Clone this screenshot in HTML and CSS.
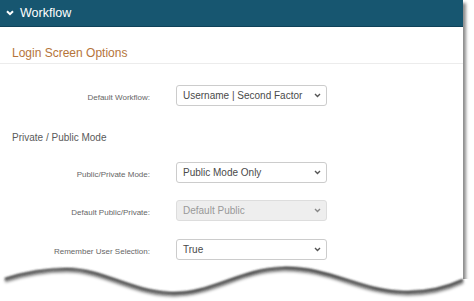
FILE: index.html
```html
<!DOCTYPE html>
<html lang="en">
<head>
    <meta charset="UTF-8">
    <title>Workflow</title>
    <link rel="stylesheet" href="styles.css">
</head>
<body>
    <div class="panel">
        <div class="panel-header">
            <svg class="caret" width="8" height="6" viewBox="0 0 8 6"><path d="M1 1.2 L4 4.2 L7 1.2" fill="none" stroke="#fff" stroke-width="2"/></svg>
            Workflow
        </div>

        <h3 class="section-title">Login Screen Options</h3>

        <div class="form-row first">
            <label>Default Workflow:</label>
            <div class="select">
                <span>Username | Second Factor</span>
                <svg width="7" height="5" viewBox="0 0 7 5"><path d="M1 1 L3.5 3.5 L6 1" fill="none" stroke="#555" stroke-width="1.4"/></svg>
            </div>
        </div>

        <div class="sub-title">Private / Public Mode</div>

        <div class="form-row">
            <label>Public/Private Mode:</label>
            <div class="select">
                <span>Public Mode Only</span>
                <svg width="7" height="5" viewBox="0 0 7 5"><path d="M1 1 L3.5 3.5 L6 1" fill="none" stroke="#555" stroke-width="1.4"/></svg>
            </div>
        </div>

        <div class="form-row">
            <label>Default Public/Private:</label>
            <div class="select disabled">
                <span>Default Public</span>
                <svg width="7" height="5" viewBox="0 0 7 5"><path d="M1 1 L3.5 3.5 L6 1" fill="none" stroke="#888" stroke-width="1.4"/></svg>
            </div>
        </div>

        <div class="form-row">
            <label>Remember User Selection:</label>
            <div class="select">
                <span>True</span>
                <svg width="7" height="5" viewBox="0 0 7 5"><path d="M1 1 L3.5 3.5 L6 1" fill="none" stroke="#555" stroke-width="1.4"/></svg>
            </div>
        </div>
    </div>

    <!-- torn edge over the bottom of the panel -->
    <svg class="torn" width="474" height="51" viewBox="0 250 474 51">
        <defs>
            <filter id="soft" x="-5%" y="-50%" width="110%" height="200%">
                <feGaussianBlur stdDeviation="0.8"/>
            </filter>
            <filter id="wide" x="-5%" y="-50%" width="110%" height="200%">
                <feGaussianBlur stdDeviation="1.8"/>
            </filter>
        </defs>
        <path d="M0,279 L5,278 C30,270 48,268 67,268 C102,268 130,290 170,292 C210,294 240,268 283,267 C330,266 360,290 403,291 C430,292 450,285 463,279 L474,279 L474,301 L0,301 Z" fill="#fff"/>
        <path d="M5,279 C30,271 48,269 67,269 C102,269 130,291 170,293 C210,295 240,269 283,268 C330,267 360,291 403,292 C430,293 450,286 463,280" fill="none" stroke="#000" stroke-opacity="0.45" stroke-width="3.5" filter="url(#wide)" transform="translate(0,1.8)"/>
        <path d="M5,278 C30,270 48,268 67,268 C102,268 130,290 170,292 C210,294 240,268 283,267 C330,266 360,290 403,291 C430,292 450,285 463,279" fill="none" stroke="#333" stroke-width="2.2" filter="url(#soft)" transform="translate(0,1)"/>
    </svg>
</body>
</html>
```

FILE: styles.css
```css
body {
    margin: 0;
    background: #fff;
    font-family: "Liberation Sans", Arial, sans-serif;
}
.panel {
    width: 463px;
    height: 300px;
    background: #fff;
    box-shadow: 3px 3px 3px rgba(0, 0, 0, 0.45);
}
.panel-header {
    height: 27px;
    box-sizing: border-box;
    background: #175670;
    border-bottom: 1px solid #0f4259;
    color: #fff;
    font-size: 12.5px;
    display: flex;
    align-items: center;
    gap: 6px;
    padding: 0 0 1px 6px;
}
.caret {
    margin-top: 1px;
}
.section-title {
    margin: 19px 0 0;
    padding: 0 12px 3px;
    font-size: 12px;
    line-height: 14px;
    font-weight: normal;
    color: #b5743a;
    border-bottom: 1px solid #ececec;
}
.form-row {
    display: grid;
    grid-template-columns: 150px 151px;
    column-gap: 26px;
    margin-top: 17.5px;
}
.form-row.first {
    margin-top: 21px;
}
.form-row label {
    text-align: right;
    font-size: 8px;
    line-height: 10px;
    padding-top: 8px;
    color: #666;
}
.select {
    height: 21px;
    box-sizing: border-box;
    border: 1px solid #ccc;
    border-radius: 3px;
    padding: 0 5px 0 6px;
    display: flex;
    align-items: center;
    justify-content: space-between;
    font-size: 10px;
    color: #4a4a4a;
    background: #fff;
}
.select.disabled {
    background: #eee;
    border-color: #ddd;
    color: #999;
}
.sub-title {
    margin: 26px 0 0 12px;
    font-size: 10px;
    line-height: 12px;
    color: #5a5a5a;
}
.torn {
    position: absolute;
    left: 0;
    top: 250px;
}
```
